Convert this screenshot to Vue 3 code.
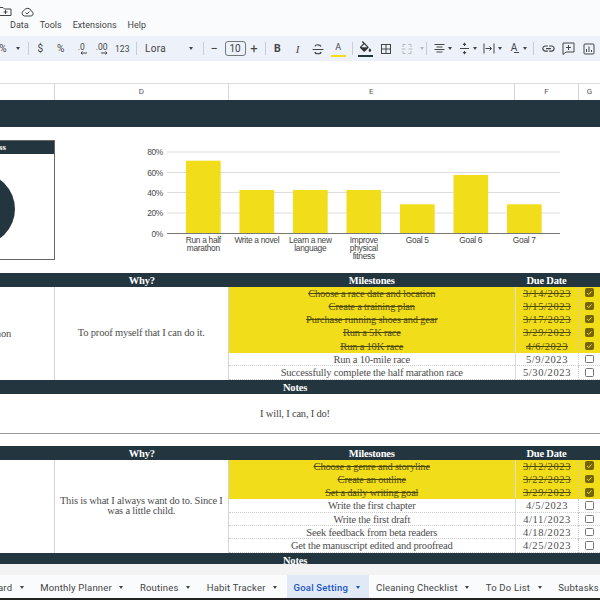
<script setup>
const menus = ['Data', 'Tools', 'Extensions', 'Help']

const columns = [
  { name: '', cls: 'col-a' },
  { name: 'D', cls: 'col-b' },
  { name: 'E', cls: 'col-c' },
  { name: 'F', cls: 'col-d' },
  { name: 'G', cls: 'col-e' }
]

const grid = [
  { label: '80%', y: 152 },
  { label: '60%', y: 172.5 },
  { label: '40%', y: 192.5 },
  { label: '20%', y: 213 },
  { label: '0%', y: 233.5 }
]

const bars = [
  { x: 186, top: 160.7, lines: ['Run a half', 'marathon'] },
  { x: 239.5, top: 190, lines: ['Write a novel'] },
  { x: 293, top: 190, lines: ['Learn a new', 'language'] },
  { x: 346.5, top: 190, lines: ['Improve', 'physical', 'fitness'] },
  { x: 400, top: 204.3, lines: ['Goal 5'] },
  { x: 453.5, top: 175, lines: ['Goal 6'] },
  { x: 507, top: 204.3, lines: ['Goal 7'] }
]

const goals = [
  {
    name: 'Run a half marathon',
    why: 'To proof myself that I can do it.',
    notes: 'I will, I can, I do!',
    steps: [
      ['Choose a race date and location', '3/14/2023', true],
      ['Create a training plan', '3/15/2023', true],
      ['Purchase running shoes and gear', '3/17/2023', true],
      ['Run a 5K race', '3/29/2023', true],
      ['Run a 10K race', '4/6/2023', true],
      ['Run a 10-mile race', '5/9/2023', false],
      ['Successfully complete the half marathon race', '5/30/2023', false]
    ]
  },
  {
    name: '',
    why: 'This is what I always want do to. Since I was a little child.',
    notes: '',
    steps: [
      ['Choose a genre and storyline', '3/12/2023', true],
      ['Create an outline', '3/22/2023', true],
      ['Set a daily writing goal', '3/29/2023', true],
      ['Write the first chapter', '4/5/2023', false],
      ['Write the first draft', '4/11/2023', false],
      ['Seek feedback from beta readers', '4/18/2023', false],
      ['Get the manuscript edited and proofread', '4/25/2023', false]
    ]
  }
]

const tabs = [
  { name: 'Dashboard', cls: 'tab-first' },
  { name: 'Monthly Planner' },
  { name: 'Routines' },
  { name: 'Habit Tracker' },
  { name: 'Goal Setting', active: true },
  { name: 'Cleaning Checklist' },
  { name: 'To Do List' },
  { name: 'Subtasks' }
]
</script>

<template>
  <div class="page">
    <header class="top">
      <div class="file-icons">
        <svg class="folder" width="12" height="11" viewBox="0 0 12 11" fill="none" stroke="#444" stroke-width="1">
          <path d="M-2 1.500h5l1.500 1.500h6.500v6.500h-13z" />
          <path d="M5.500 4v4M3.500 6h4" />
        </svg>
        <svg class="cloud" width="13" height="10" viewBox="0 0 13 10" fill="none" stroke="#444" stroke-width="1">
          <path d="M3.500 9h6.500a2.400 2.400 0 0 0 .4-4.700 4 4 0 0 0-7.500-.7 2.800 2.800 0 0 0 .6 5.400z" />
          <path d="M4.500 5.500l1.500 1.500 2.500-2.500" />
        </svg>
      </div>
      <nav class="menu">
        <span v-for="m in menus" :key="m">{{ m }}</span>
      </nav>
    </header>

    <div class="toolbar">
      <span class="tb pct">%</span><i class="caret"></i><b class="sep sep-1"></b>
      <span class="tb">$</span>
      <span class="tb">%</span>
      <span class="tb small decimal">
        <span>.0</span>
        <svg width="7" height="4" viewBox="0 0 7 4" fill="none" stroke="#444" stroke-width="1"><path d="M7 2H1M2.500 .5L1 2l1.500 1.500" /></svg>
      </span>
      <span class="tb small decimal">
        <span>.00</span>
        <svg width="7" height="4" viewBox="0 0 7 4" fill="none" stroke="#444" stroke-width="1"><path d="M0 2h6M4.500 .5L6 2 4.500 3.500" /></svg>
      </span>
      <span class="tb small">123</span>
      <b class="sep sep-2"></b>
      <span class="font-name">Lora</span><i class="caret"></i>
      <b class="sep sep-3"></b>
      <span class="tb step">−</span>
      <span class="size">10</span>
      <span class="tb step plus">+</span>
      <b class="sep sep-4"></b>
      <span class="tb bold">B</span>
      <span class="tb italic">I</span>
      <span class="tb">
        <svg width="14" height="14" viewBox="0 0 14 14" fill="none" stroke="#444" stroke-width="1.200">
          <path d="M1.500 7.500h11M10 4.500c-.5-2-5.500-2.500-6-.2M3.900 10c.5 2.300 5.700 2.300 6.200 0" />
        </svg>
      </span>
      <span class="tb text-color">A<u></u></span>
      <b class="sep sep-5"></b>
      <span class="tb fill">
        <svg width="15" height="12" viewBox="0 0 24 19" fill="#333">
          <path d="M16.560 8.940L7.620 0 6.210 1.410l2.380 2.380-5.150 5.150c-.59.59-.59 1.540 0 2.120l5.500 5.500c.29.29.68.44 1.060.44s.77-.15 1.060-.44l5.500-5.500c.59-.58.59-1.530 0-2.120zM5.210 10L10 5.210 14.790 10H5.210zM19 11.500s-2 2.170-2 3.500c0 1.100.9 2 2 2s2-.9 2-2c0-1.330-2-3.500-2-3.500z" />
        </svg>
        <u></u>
      </span>
      <span class="tb">
        <svg width="12" height="12" viewBox="0 0 12 12" fill="none" stroke="#444" stroke-width="1">
          <rect x="1.500" y="1.500" width="9" height="9" />
          <path d="M6 1.500v9M1.500 6h9" />
        </svg>
      </span>
      <span class="tb merge">
        <svg width="12" height="12" viewBox="0 0 12 12" fill="none" stroke="#b4b8bd" stroke-width="1">
          <path d="M2 4V1.500h2.500M7.500 1.500H10V4M2 8v2.500h2.500M7.500 10.500H10V8" />
          <path d="M.5 6h4M7.500 6h4" />
        </svg>
      </span>
      <i class="caret muted"></i>
      <b class="sep sep-6"></b>
      <span class="tb wide">
        <svg width="11" height="11" viewBox="0 0 11 11" stroke="#444" stroke-width="1">
          <path d="M.5 1.500h10M2.500 4h6M.5 6.500h10M2.500 9h6" />
        </svg>
      </span>
      <i class="caret"></i>
      <span class="tb wide">
        <svg width="11" height="13" viewBox="0 0 11 13" fill="#444" stroke="#444" stroke-width="1">
          <path d="M1 6.500h9" />
          <path d="M5.500 1v3M5.500 9v3" />
          <path stroke="none" d="M3.500 3h4l-2 -2.500zM3.500 10h4l-2 2.500z" />
        </svg>
      </span>
      <i class="caret"></i>
      <span class="tb wide">
        <svg width="12" height="11" viewBox="0 0 12 11" fill="none" stroke="#444" stroke-width="1">
          <path d="M1 .5v10M11 .5v10M2.500 5.500h6M6.500 3.500l2 2-2 2" />
        </svg>
      </span>
      <i class="caret"></i>
      <span class="tb wide rotate">A<svg width="5" height="3" viewBox="0 0 5 3" stroke="#444"><path d="M0 .5h5" /></svg></span>
      <i class="caret"></i>
      <b class="sep sep-7"></b>
      <span class="tb">
        <svg width="15" height="15" viewBox="0 0 24 24" fill="#444">
          <path d="M3.900 12c0-1.710 1.390-3.100 3.100-3.100h4V7H7c-2.760 0-5 2.240-5 5s2.240 5 5 5h4v-1.900H7c-1.710 0-3.100-1.390-3.100-3.100zM8 13h8v-2H8v2zm9-6h-4v1.900h4c1.710 0 3.100 1.390 3.100 3.100s-1.390 3.100-3.100 3.100h-4V17h4c2.760 0 5-2.240 5-5s-2.240-5-5-5z" />
        </svg>
      </span>
      <span class="tb">
        <svg width="13" height="13" viewBox="0 0 13 13" fill="none" stroke="#444" stroke-width="1">
          <path d="M1 1h11v9H4l-3 2.500zM6.500 3v5M4 5.500h5" />
        </svg>
      </span>
      <span class="tb">
        <svg width="12" height="12" viewBox="0 0 12 12" fill="none" stroke="#444" stroke-width="1">
          <rect x="1" y="1" width="10" height="10" rx="1" />
          <path d="M3.500 9V6M6 9V3.500M8.500 9V7" />
        </svg>
      </span>
    </div>

    <div class="formula"></div>

    <div class="col-heads">
      <div v-for="c in columns" :key="c.cls" class="col-head" :class="c.cls">{{ c.name }}</div>
    </div>

    <main class="sheet">
      <div class="band"></div>

      <section class="summary">
        <div class="progress">
          <div class="progress-head"><span>Progress</span></div>
          <div class="progress-body"><div class="donut"></div></div>
        </div>
        <svg class="chart" width="545" height="146" viewBox="55 127 545 146">
          <g v-for="g in grid" :key="g.label">
            <line x1="167" x2="560" :y1="g.y" :y2="g.y" :stroke="g.label === '0%' ? '#777' : '#ddd'" stroke-width="1" />
            <text x="163" :y="g.y + 3" text-anchor="end" class="axis">{{ g.label }}</text>
          </g>
          <g v-for="b in bars" :key="b.x">
            <rect :x="b.x" :y="b.top" width="34.700" :height="233 - b.top" fill="#f2dd1a" />
            <text
              v-for="(line, i) in b.lines"
              :key="line"
              :x="b.x + 17.300"
              :y="243 + i * 7.800"
              text-anchor="middle"
              class="axis label"
            >{{ line }}</text>
          </g>
        </svg>
      </section>

      <section v-for="(goal, n) in goals" :key="n" class="goal" :class="{ 'goal-last': n === 1 }">
        <div class="head head-a"></div>
        <div class="head">Why?</div>
        <div class="head">Milestones</div>
        <div class="head">Due Date</div>
        <div class="head"></div>

        <div class="goal-name"><span>{{ goal.name }}</span></div>
        <div class="goal-why">{{ goal.why }}</div>

        <template v-for="(step, i) in goal.steps" :key="i">
          <div class="cell" :class="{ done: step[2] }">{{ step[0] }}</div>
          <div class="cell date" :class="{ done: step[2] }">{{ step[1] }}</div>
          <div class="cell check" :class="{ done: step[2] }">
            <span class="box" :class="{ on: step[2] }">
              <svg v-if="step[2]" width="8" height="8" viewBox="0 0 8 8" fill="none" stroke="#f2dd1a" stroke-width="1.200">
                <path d="M1.200 4l2 2 3.600-4" />
              </svg>
            </span>
          </div>
        </template>

        <div class="notes-head">Notes</div>
        <div v-if="n === 0" class="notes-body">{{ goal.notes }}</div>
      </section>
    </main>

    <footer class="tabs">
      <div v-for="t in tabs" :key="t.name" class="tab" :class="[t.cls, { active: t.active }]">
        {{ t.name }}<i class="caret"></i>
      </div>
    </footer>
  </div>
</template>

<style scoped>
.page {
  width: 600px;
  height: 600px;
  display: flex;
  flex-direction: column;
  overflow: hidden;
  background: #fff;
  font-family: Roboto, "Liberation Sans", sans-serif;
  color: #444;
}

.top {
  height: 36px;
  background: #f9fbfd;
  flex-shrink: 0;
}

.file-icons {
  height: 18px;
  padding-top: 4px;
  display: flex;
  align-items: center;
  box-sizing: border-box;
}

.folder {
  margin-top: 1px;
}

.cloud {
  margin-left: 9px;
  margin-top: 1px;
}

.menu {
  display: flex;
  padding-left: 10px;
  gap: 11px;
  font-size: 9px;
  line-height: 14px;
}

.toolbar {
  height: 25px;
  background: #edf2fa;
  display: flex;
  align-items: center;
  flex-shrink: 0;
  font-size: 10px;
  white-space: nowrap;
}

.tb {
  width: 20.500px;
  height: 20px;
  flex-shrink: 0;
  display: flex;
  align-items: center;
  justify-content: center;
  position: relative;
  color: #444;
}

.tb.pct {
  width: 20px;
  margin-left: -7px;
}

.tb.small {
  font-size: 8.500px;
}

.tb.decimal span {
  margin-top: -4px;
}

.tb.decimal svg {
  position: absolute;
  left: 9px;
  top: 12.500px;
}

.caret {
  display: block;
  width: 0;
  height: 0;
  flex-shrink: 0;
  border-left: 2.500px solid transparent;
  border-right: 2.500px solid transparent;
  border-top: 3px solid #444;
  margin: 0 2.500px;
}

.caret.muted {
  border-top-color: #b4b8bd;
}

.tb.wide + .caret {
  margin: 0 4.500px 0 0.500px;
}

.sep {
  display: block;
  width: 1px;
  height: 13px;
  background: #c7cdd4;
  flex-shrink: 0;
}

.sep-1 { margin: 0 1.500px 0 5.500px; }
.sep-2 { margin: 0 8px 0 3.500px; }
.sep-3 { margin: 0 0 0 7.500px; }
.sep-4 { margin: 0 1px 0 2.500px; }
.sep-5 { margin: 0 2.500px 0 3px; }
.sep-6 { margin: 0 4px 0 0; }
.sep-7 { margin: 0 3.750px 0 2px; }

.font-name {
  width: 41.500px;
  font-size: 10px;
  letter-spacing: 0.3px;
  flex-shrink: 0;
}

.tb.step {
  font-size: 13px;
}

.tb.plus {
  width: 17px;
}

.size {
  width: 21px;
  height: 15px;
  box-sizing: border-box;
  border: 1px solid #74777a;
  border-radius: 3px;
  font-size: 10px;
  line-height: 13px;
  text-align: center;
  flex-shrink: 0;
}

.tb.bold {
  font-weight: 700;
  font-size: 10.500px;
}

.tb.italic {
  font-style: italic;
  font-family: "Liberation Serif", serif;
  font-size: 11px;
  width: 20px;
}

.tb u {
  position: absolute;
  left: 3px;
  right: 3px;
  bottom: 2px;
  height: 2px;
  background: #f2dd1a;
}

.tb.text-color {
  font-size: 9px;
  padding-bottom: 3px;
  box-sizing: border-box;
}

.tb.fill {
  padding-bottom: 3px;
  box-sizing: border-box;
}

.tb.fill u {
  left: 2.500px;
  right: 2.500px;
  background: #233640;
}

.tb.merge {
  width: 21px;
}

.tb.wide {
  width: 16px;
}

.tb.rotate {
  font-size: 10px;
  padding-bottom: 2px;
  box-sizing: border-box;
}

.tb.rotate svg {
  position: absolute;
  left: 8px;
  bottom: 4px;
}

.formula {
  height: 23px;
  flex-shrink: 0;
  background: #fff;
  border-bottom: 1px solid #ddd;
  box-sizing: border-box;
}

.col-heads {
  display: flex;
  height: 16px;
  flex-shrink: 0;
}

.col-head {
  box-sizing: border-box;
  border-right: 1px solid #d5d5d5;
  font-size: 8px;
  line-height: 16px;
  text-align: center;
  color: #555;
}

.col-a { width: 55px; }
.col-b { width: 173.500px; }
.col-c { width: 286.500px; }
.col-d { width: 64px; }
.col-e { width: 21px; border-right: 0; }

.sheet {
  flex: 1;
  min-height: 0;
  overflow: hidden;
}

.band {
  height: 27px;
  background: #233640;
}

.summary {
  height: 146px;
  display: flex;
}

.progress {
  width: 55px;
  height: 120px;
  margin-top: 13px;
  box-sizing: border-box;
  border: 1px solid #666;
  border-left: 0;
  display: flex;
  flex-direction: column;
  flex-shrink: 0;
}

.progress-head {
  height: 13px;
  background: #233640;
  color: #fff;
  font: 700 9px/13px "Liberation Serif", serif;
  display: flex;
  justify-content: flex-end;
  padding-right: 48px;
  overflow: hidden;
  flex-shrink: 0;
}

.progress-body {
  flex: 1;
  display: flex;
  justify-content: flex-end;
  align-items: center;
  overflow: hidden;
}

.donut {
  width: 72px;
  height: 72px;
  flex-shrink: 0;
  border-radius: 50%;
  background: #233640;
  margin-right: 39px;
  margin-top: 5px;
}

.chart {
  display: block;
  flex-shrink: 0;
}

.axis {
  font-family: "Liberation Sans", sans-serif;
  font-size: 8.400px;
  letter-spacing: -0.3px;
  fill: #4a4a4a;
}

.label {
  fill: #444;
}

.goal {
  display: grid;
  grid-template-columns: 55px 173.500px 286.500px 63px 22px;
  grid-template-rows: 13.500px repeat(7, 13.300px) 14px 39.500px;
  font-family: "Liberation Serif", serif;
  font-size: 10.500px;
  letter-spacing: -0.2px;
  color: #4d4d4d;
  border-bottom: 1.500px solid #999;
  margin-bottom: 12px;
}

.goal-last {
  border-bottom: 0;
  margin-bottom: 0;
}

.head {
  background: #233640;
  color: #fff;
  font-weight: 700;
  line-height: 15px;
  text-align: center;
}

.goal-name {
  grid-column: 1;
  grid-row: 2 / span 7;
  border-right: 1px solid #d5d5d5;
  display: flex;
  align-items: center;
  justify-content: flex-end;
  overflow: hidden;
  white-space: nowrap;
  padding-right: 43px;
}

.goal-name span {
  flex-shrink: 0;
}

.goal-why {
  grid-column: 2;
  grid-row: 2 / span 7;
  border-right: 1px solid #d5d5d5;
  display: flex;
  align-items: center;
  justify-content: center;
  text-align: center;
  padding: 0 3px;
  line-height: 10.500px;
}

.cell {
  grid-column: 3;
  text-align: center;
  line-height: 13.500px;
  white-space: nowrap;
  box-sizing: border-box;
  border-bottom: 1px dotted #ccc;
}

.cell.date {
  grid-column: 4;
  border-left: 1px solid #ddd;
  letter-spacing: 0.6px;
}

.cell.check {
  grid-column: 5;
  border-left: 1px dotted #ccc;
  display: flex;
  align-items: center;
  justify-content: center;
}

.cell.done {
  background: #f2dd1a;
  color: #4f4a12;
  text-decoration: line-through;
  border-bottom-color: #f2dd1a;
}

.box {
  width: 8.500px;
  height: 8.500px;
  box-sizing: border-box;
  border: 1px solid #777;
  border-radius: 1.500px;
  display: flex;
  align-items: center;
  justify-content: center;
}

.box.on {
  background: #72650c;
  border-color: #72650c;
}

.notes-head {
  grid-column: 1 / -1;
  background: #233640;
  color: #fff;
  font-weight: 700;
  line-height: 15px;
  text-align: center;
  padding-right: 10px;
}

.notes-body {
  grid-column: 1 / -1;
  display: flex;
  align-items: center;
  justify-content: center;
  padding-right: 10px;
  color: #444;
}

.tabs {
  height: 36px;
  flex-shrink: 0;
  box-sizing: border-box;
  display: flex;
  background: #f9fbfd;
  border-top: 11px solid #f3f3f3;
  border-bottom: 2px solid #222;
  overflow: hidden;
  font-size: 9.500px;
  letter-spacing: 0.2px;
  white-space: nowrap;
}

.tab {
  display: flex;
  align-items: center;
  padding: 1px 7px 0;
  flex-shrink: 0;
  color: #444;
}

.tab .caret {
  margin-left: 7.500px;
}

.tab-first {
  margin-left: -42.500px;
}

.tab.active {
  background: #e1e9f7;
  color: #1a56c4;
  font-weight: 500;
}

.tab.active .caret {
  border-top-color: #1a56c4;
}
</style>

<style>
html, body {
  margin: 0;
  background: #fff;
}
</style>
